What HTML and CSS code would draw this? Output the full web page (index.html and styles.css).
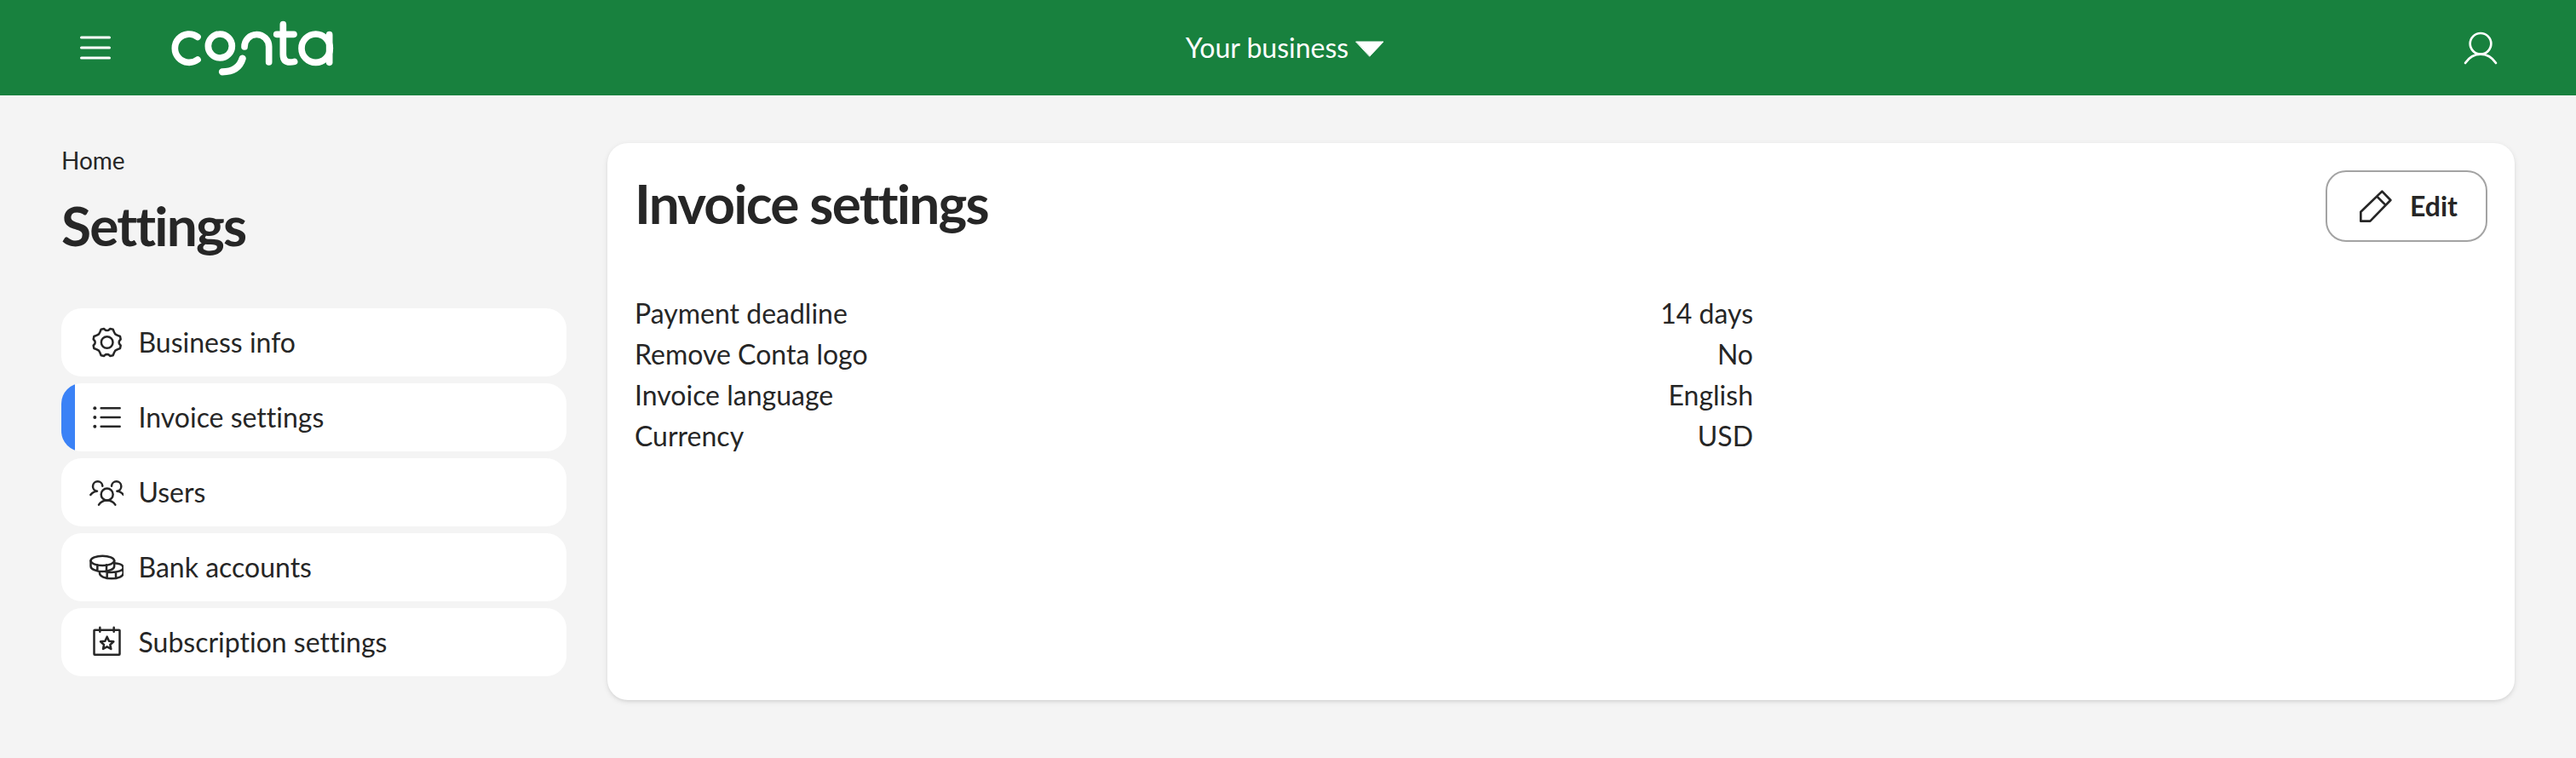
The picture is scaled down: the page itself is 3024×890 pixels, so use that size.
FILE: index.html
```html
<!DOCTYPE html>
<html lang="en">
<head>
<meta charset="utf-8">
<title>Conta – Invoice settings</title>
<link rel="stylesheet" href="styles.css">
</head>
<body>
<header class="topbar">
  <div class="topbar-left">
    <svg class="menu-icon" viewBox="0 0 36 28"><path d="M1.5 2h33M1.5 14h33M1.5 26h33"/></svg>
    <svg class="logo" viewBox="420 60 582 210" role="img" aria-label="conta">
      <path d="M516 127A50 50 0 1 0 516 207"/>
      <circle cx="595" cy="159" r="42"/>
      <path d="M681 162A43 43 0 0 1 767 161V216"/>
      <path class="tail" d="M674 203Q660 250 603 250"/>
      <path d="M817 83V188Q817 216 842 216Q850 216 857 214M794 118H855"/>
      <circle cx="932" cy="167" r="50"/>
      <path d="M980 119V217"/>
    </svg>
  </div>
  <button class="business">Your business<svg class="caret" viewBox="0 0 34 20"><path d="M1 1H33L17 18Z"/></svg></button>
  <div class="topbar-right">
    <svg class="user-icon" viewBox="630 100 132 126"><circle cx="696" cy="149" r="37"/><path d="M642 217Q663 186 696 186Q729 186 750 217"/></svg>
  </div>
</header>
<div class="layout">
  <aside class="sidebar">
    <a class="crumb">Home</a>
    <h1 class="title">Settings</h1>
    <nav class="nav">
      <a class="nav-item">
        <svg class="icon" viewBox="135 -60 120 120"><g transform="translate(197 0)"><circle r="20.5"/><path d="M0 -42L5 -43L11 -48L21 -46L25 -36L29 -29L36 -25L46 -21L48 -11L43 -5L42 0L43 5L48 11L46 21L36 25L29 29L25 36L21 46L11 48L5 43L0 42L-5 43L-11 48L-21 46L-25 36L-29 29L-36 25L-46 21L-48 11L-43 5L-42 0L-43 -5L-48 -11L-46 -21L-36 -25L-29 -29L-25 -36L-21 -46L-11 -48L-5 -43Z"/></g></svg>
        <span>Business info</span>
      </a>
      <a class="nav-item active">
        <svg class="icon" viewBox="135 -60 120 120"><path d="M176 -32.500H242M176 0H242M176 32.500H242"/><g class="dots"><circle cx="154" cy="-32.500" r="6"/><circle cx="154" cy="0" r="6"/><circle cx="154" cy="32.500" r="6"/></g></svg>
        <span>Invoice settings</span>
      </a>
      <a class="nav-item">
        <svg class="icon" viewBox="135 -60 120 120"><circle cx="197" cy="7.500" r="21"/><path d="M168 44Q178 28.500 197 28.500Q216 28.500 226 44"/><path d="M181 -22A17 17 0 1 0 162 -4Q148 -3 139 9"/><path d="M213 -22A17 17 0 1 1 232 -4Q246 -3 255 9"/></svg>
        <span>Users</span>
      </a>
      <a class="nav-item">
        <svg class="icon" viewBox="135 -60 120 120"><ellipse cx="181" cy="-23" rx="41.500" ry="17"/><path d="M139.500 -23V-4C139.500 7 158 15 181 15S222.500 7 222.500 -4V-23M163 -8V12M195 -8V13"/><path d="M223 -14C242 -13 254 -7 254 2C254 11 236 18 213 18C205 18 197 17 190 15M171 16V22C171 32 190 40 213 40S254 32 254 22V2M197 18V37M228 18V37"/></svg>
        <span>Bank accounts</span>
      </a>
      <a class="nav-item">
        <svg class="icon" viewBox="135 -60 120 120"><rect x="151.500" y="-43" width="90" height="87" rx="2"/><path d="M172 -52V-37M221 -52V-37"/><path d="M197 -19L204 -4L220 -2L208 9L211 24L197 16L183 24L186 9L174 -2L190 -4Z"/></svg>
        <span>Subscription settings</span>
      </a>
    </nav>
  </aside>
  <main class="card">
    <div class="card-head">
      <h2 class="title">Invoice settings</h2>
      <button class="edit">
        <svg class="pencil" viewBox="255 651 144 144"><path d="M349 671L379 702L307 776H274V743ZM331 689L361 719"/></svg>
        <span>Edit</span>
      </button>
    </div>
    <dl class="rows">
      <div class="row"><dt>Payment deadline</dt><dd>14 days</dd></div>
      <div class="row"><dt>Remove Conta logo</dt><dd>No</dd></div>
      <div class="row"><dt>Invoice language</dt><dd>English</dd></div>
      <div class="row"><dt>Currency</dt><dd>USD</dd></div>
    </dl>
  </main>
</div>
</body>
</html>
```
FILE: styles.css
```css
* { box-sizing: border-box; }
body {
  margin: 0;
  min-height: 890px;
  background: #f4f4f4;
  color: #262626;
  font: 400 32px/48px Lato, "Liberation Sans", sans-serif;
  font-variant-ligatures: none;
}
button { font: inherit; font-variant-ligatures: none; color: inherit; background: none; border: 0; padding: 0; }
svg { display: block; flex: none; fill: none; stroke: currentColor; stroke-linecap: round; stroke-linejoin: round; }
.topbar {
  display: grid;
  grid-template-columns: 1fr auto 1fr;
  align-items: center;
  height: 112px;
  padding: 0 90px 0 94px;
  background: #18813e;
  color: #fff;
}
.topbar-left { display: flex; align-items: center; gap: 70px; }
.topbar-right { display: flex; justify-content: flex-end; }
.menu-icon { width: 36px; height: 28px; stroke-width: 3; }
.logo { width: 194px; height: 70px; stroke-width: 23; }
.logo .tail { stroke-width: 25; }
.business { display: flex; align-items: center; gap: 8px; margin-right: 11px; }
.caret { width: 34px; height: 20px; fill: currentColor; stroke-width: 1; margin-top: 3px; }
.user-icon { width: 44px; height: 42px; stroke-width: 8; }
.layout {
  display: grid;
  grid-template-columns: 593px 1fr;
  gap: 48px;
  padding: 56px 72px 0;
}
.crumb { display: block; font-size: 28px; line-height: 40px; }
.title { margin: 0; font-size: 64px; line-height: 80px; font-weight: 700; letter-spacing: -0.028em; }
.sidebar .title { margin-top: 17px; }
.card .title { margin-top: -1px; }
.nav { display: grid; gap: 8px; margin-top: 57px; }
.nav-item {
  display: flex;
  align-items: center;
  gap: 17.5px;
  height: 80px;
  padding-left: 33px;
  border-radius: 24px;
  background: #fff;
}
.nav-item.active { background: linear-gradient(to right, #3b82f6 16px, #fff 16px); }
.icon { width: 40px; height: 40px; stroke-width: 7.5; }
.dots { fill: currentColor; stroke: none; }
.card {
  height: 654px;
  padding: 32px;
  border-radius: 24px;
  background: #fff;
  box-shadow: 0 2px 6px rgba(0, 0, 0, 0.1), 0 2px 4px -2px rgba(0, 0, 0, 0.1);
}
.card-head { display: flex; align-items: flex-start; justify-content: space-between; height: 84px; }
.edit {
  display: flex;
  align-items: center;
  gap: 16px;
  width: 190px;
  height: 84px;
  padding-left: 33px;
  border: 2px solid #a3a3a3;
  border-radius: 24px;
  font-weight: 700;
}
.pencil { width: 48px; height: 48px; stroke-width: 8; }
.rows { width: 1313px; margin: 60px 0 0; }
.row { display: flex; justify-content: space-between; }
.row dd { margin: 0; }
```
